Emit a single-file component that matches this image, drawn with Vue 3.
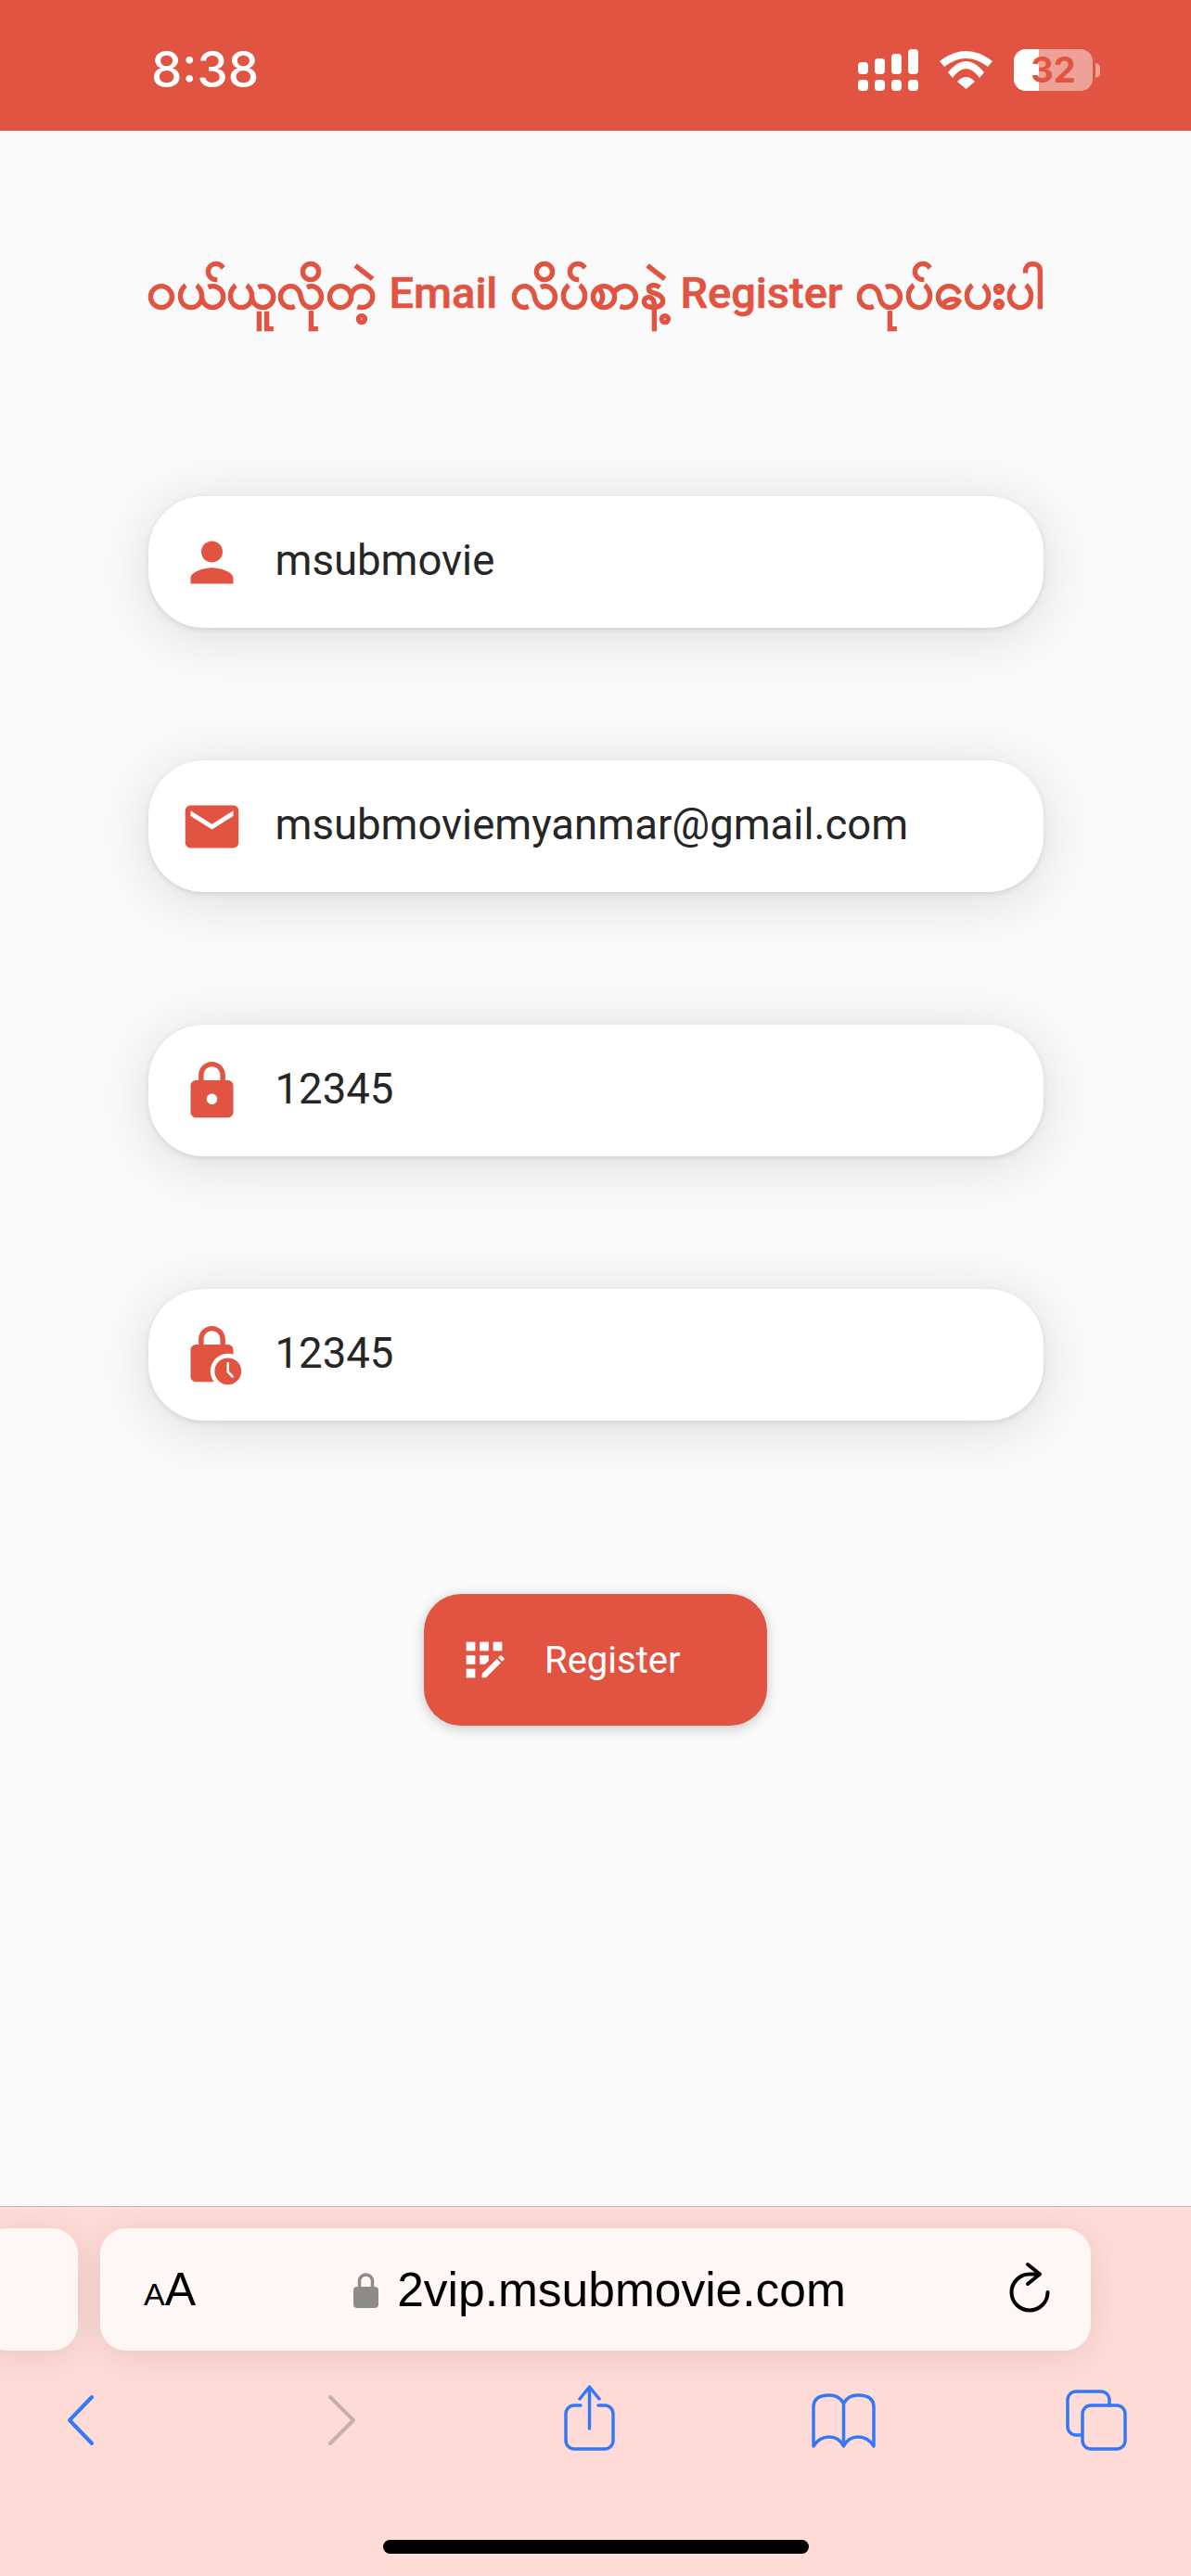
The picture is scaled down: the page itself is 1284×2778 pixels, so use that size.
<script setup>
const lockPath = 'M18 8h-1V6c0-2.76-2.24-5-5-5S7 3.24 7 6v2H6c-1.1 0-2 .9-2 2v10c0 1.1.9 2 2 2h12c1.1 0 2-.9 2-2V10c0-1.1-.9-2-2-2zm-6 9c-1.1 0-2-.9-2-2s.9-2 2-2 2 .9 2 2-.9 2-2 2zm3.1-9H8.9V6c0-1.71 1.39-3.1 3.1-3.1 1.71 0 3.1 1.39 3.1 3.1v2z'

const fields = [
  { value: 'msubmovie', icon: 'M12 12c2.21 0 4-1.79 4-4s-1.79-4-4-4-4 1.79-4 4 1.79 4 4 4zm0 2c-2.67 0-8 1.34-8 4v2h16v-2c0-2.66-5.33-4-8-4z' },
  { value: 'msubmoviemyanmar@gmail.com', icon: 'M20 4H4c-1.1 0-1.99.9-1.99 2L2 18c0 1.1.9 2 2 2h16c1.1 0 2-.9 2-2V6c0-1.1-.9-2-2-2zm0 4l-8 5-8-5V6l8 5 8-5v2z' },
  { value: '12345', icon: lockPath },
  { value: '12345', icon: 'M18 8h-1V6c0-2.76-2.24-5-5-5S7 3.24 7 6v2H6c-1.1 0-2 .9-2 2v10c0 1.1.9 2 2 2h12c1.1 0 2-.9 2-2V10c0-1.1-.9-2-2-2zm-2.9 0H8.9V6c0-1.71 1.39-3.1 3.1-3.1 1.71 0 3.1 1.39 3.1 3.1v2z', clock: true }
]

const signalBars = [
  { x: 0, y: 14 },
  { x: 18, y: 10 },
  { x: 36, y: 5 },
  { x: 54, y: 0 }
]
</script>

<template>
  <div class="page">
    <header class="status-bar">
      <span class="time">8:38</span>
      <div class="status-icons">
        <svg class="signal" width="65" height="45" viewBox="0 0 65 45" fill="#fff">
          <g v-for="bar in signalBars" :key="bar.x">
            <rect :x="bar.x" :y="bar.y" width="11" :height="27 - bar.y" rx="4" />
            <rect :x="bar.x" y="33" width="11" height="12" rx="4" />
          </g>
        </svg>
        <svg class="wifi" width="57" height="41" viewBox="0 0 57 41" fill="#fff">
          <path d="M0 11Q28.5-11 57 11L52 17Q28.5-1 5 17Z" />
          <path d="M9 23Q28.5-1 48 23L43 29Q28.5 9 14 29Z" />
          <path d="M19 33Q28.5 23 38 33L28.5 41Z" />
        </svg>
        <div class="battery">
          <div class="battery-fill"></div>
          <span class="battery-level">32</span>
        </div>
        <div class="battery-nub"></div>
      </div>
    </header>

    <main class="content">
      <h1 class="title">ဝယ်ယူလိုတဲ့ <span class="latin">Email</span> လိပ်စာနဲ့ <span class="latin">Register</span> လုပ်ပေးပါ</h1>

      <div class="fields">
        <div v-for="field in fields" :key="field.icon" class="field">
          <svg class="field-icon" viewBox="0 0 24 24">
            <path :d="field.icon" />
            <template v-if="field.clock">
              <circle class="clock-ring" cx="18" cy="18" r="6.6" />
              <circle cx="18" cy="18" r="5" />
              <path class="clock-hands" d="M18 15v3.200l1.700 1.800" />
            </template>
          </svg>
          <span class="field-text">{{ field.value }}</span>
        </div>
      </div>

      <button class="register" type="button">
        <svg class="register-icon" viewBox="0 0 24 24" fill="#fff">
          <rect x="10" y="4" width="4" height="4" />
          <rect x="4" y="16" width="4" height="4" />
          <rect x="4" y="10" width="4" height="4" />
          <rect x="4" y="4" width="4" height="4" />
          <polygon points="14,12.42 14,10 10,10 10,14 12.42,14" />
          <path d="M20.88 11.29l-1.17-1.17c-.16-.16-.42-.16-.58 0L18.25 11 20 12.75l.88-.88c.16-.16.16-.42 0-.58z" />
          <polygon points="11,18.25 11,20 12.75,20 19.42,13.33 17.67,11.58" />
          <polygon points="16,4 16,8 20,8 20,4" />
        </svg>
        <span class="register-text">Register</span>
      </button>
    </main>

    <footer class="browser">
      <div class="tabs-row">
        <div class="prev-tab"></div>
        <div class="address">
          <span class="text-size"><small>A</small>A</span>
          <div class="url">
            <svg width="27" height="39" viewBox="0 0 27 39" fill="none">
              <path d="M6.5 18V10a7 7 0 0 1 14 0v8" stroke="#8e8b8b" stroke-width="3.5" />
              <rect y="16" width="27" height="23" rx="4" fill="#8e8b8b" />
            </svg>
            <span>2vip.msubmovie.com</span>
          </div>
          <svg class="reload" width="46" height="56" viewBox="0 0 46 56" fill="none" stroke="#000" stroke-width="4" stroke-linecap="round" stroke-linejoin="round">
            <path d="M31 14.500H22A19.500 19.500 0 1 0 41.500 34" />
            <path d="M20 4l13 10.500L20 25" />
          </svg>
        </div>
      </div>

      <div class="toolbar">
        <svg width="30" height="76" viewBox="0 0 30 76" fill="none" stroke="#3478f6" stroke-width="4" stroke-linecap="round" stroke-linejoin="round">
          <path d="M27 13L3 38l24 25" />
        </svg>
        <svg class="forward" width="31" height="76" viewBox="0 0 31 76" fill="none" stroke="#c4b0ac" stroke-width="4" stroke-linecap="round" stroke-linejoin="round">
          <path d="M3 13l25 25L3 63" />
        </svg>
        <svg class="share" width="55" height="76" viewBox="0 0 55 76" fill="none" stroke="#3478f6" stroke-width="3.5" stroke-linecap="round" stroke-linejoin="round">
          <path d="M18 22h-7a9 9 0 0 0-9 9v29a9 9 0 0 0 9 9h33a9 9 0 0 0 9-9V31a9 9 0 0 0-9-9h-7" />
          <path d="M27.500 47V2M17 15L27.500 2 38 15" />
        </svg>
        <svg class="book" width="71" height="76" viewBox="0 0 69 76" fill="none" stroke="#3478f6" stroke-width="3.5" stroke-linecap="round" stroke-linejoin="round">
          <path d="M34.500 20C31 13 25 11 19 11 10 11 2 14 2 24v42c5-8 11-10 17-10s12 3 15.500 10c3.500-7 9.500-10 15.500-10s12 2 17 10V24c0-10-8-13-17-13-6 0-12 2-15.500 9v46" />
        </svg>
        <svg class="tabs" width="66" height="76" viewBox="0 0 66 76" fill="none" stroke="#3478f6" stroke-width="3.500" stroke-linecap="round" stroke-linejoin="round">
          <path d="M16 54h-5a9 9 0 0 1-9-9V16a9 9 0 0 1 9-9h27a9 9 0 0 1 9 9v6" />
          <rect x="18" y="22" width="46" height="47" rx="9" />
        </svg>
      </div>

      <div class="home-bar"></div>
    </footer>
  </div>
</template>

<style scoped>
.page {
  display: flex;
  flex-direction: column;
  height: 2778px;
  overflow: hidden;
  background: #fafafa;
  font-family: Roboto, sans-serif;
}

.status-bar {
  display: flex;
  justify-content: space-between;
  flex-shrink: 0;
  height: 141px;
  padding: 53px 98px 0 163px;
  box-sizing: border-box;
  background: #e15442;
  color: #fff;
}

.time {
  font-family: Inter, sans-serif;
  font-size: 53px;
  font-weight: 500;
  line-height: 45px;
}

.status-icons {
  display: flex;
  align-items: flex-start;
}

.wifi {
  margin: 2px 23px 0;
}

.battery {
  position: relative;
  width: 85px;
  height: 45px;
  border-radius: 13px;
  background: rgba(255, 255, 255, 0.45);
  text-align: center;
}

.battery-fill {
  position: absolute;
  top: 0;
  left: 0;
  bottom: 0;
  width: 27px;
  border-radius: 13px 0 0 13px;
  background: #fff;
}

.battery-level {
  position: relative;
  display: block;
  font-family: Inter, sans-serif;
  font-size: 38px;
  font-weight: 700;
  line-height: 45px;
  color: #e15442;
}

.battery-nub {
  width: 5px;
  height: 16px;
  margin: 15px 0 0 3px;
  border-radius: 0 8px 8px 0;
  background: rgba(255, 255, 255, 0.45);
}

.content {
  display: flex;
  flex: 1;
  flex-direction: column;
  align-items: center;
}

.title {
  height: 394px;
  margin: 0;
  padding-top: 137px;
  box-sizing: border-box;
  font-size: 56.5px;
  font-weight: 700;
  line-height: 70px;
  color: #e15442;
  white-space: nowrap;
  -webkit-text-stroke: 0.8px #e15442;
}

.latin {
  font-size: 47px;
  font-weight: 500;
  -webkit-text-stroke: 0.6px #e15442;
}

.fields {
  display: flex;
  flex-direction: column;
  gap: 143px;
  width: 965px;
}

.field {
  display: flex;
  align-items: center;
  gap: 34px;
  height: 142px;
  padding-left: 34px;
  box-sizing: border-box;
  border-radius: 60px;
  background: #fff;
  box-shadow: 0 8px 60px rgba(0, 0, 0, 0.12), 0 2px 6px rgba(0, 0, 0, 0.1);
}

.field-icon {
  flex-shrink: 0;
  width: 69px;
  height: 69px;
  fill: #e15442;
}

.clock-ring {
  fill: #fff;
}

.clock-hands {
  fill: none;
  stroke: #fff;
  stroke-width: 0.9;
  stroke-linecap: round;
}

.field-text {
  margin-top: -3px;
  font-size: 45.5px;
  color: #262626;
}

.register {
  display: flex;
  align-items: center;
  gap: 36px;
  width: 370px;
  height: 142px;
  margin-top: 187px;
  padding: 0 0 0 36px;
  border: none;
  border-radius: 40px;
  background: #e15442;
  box-shadow: 0 3px 14px rgba(0, 0, 0, 0.2);
  color: #fff;
  font-family: inherit;
}

.register-icon {
  flex-shrink: 0;
  width: 58px;
  height: 58px;
}

.register-text {
  font-size: 40px;
}

.browser {
  flex-shrink: 0;
  height: 399px;
  box-sizing: border-box;
  border-top: 1px solid #c9b6b4;
  background: #ffdcd7;
}

.tabs-row {
  display: flex;
  gap: 24px;
  margin: 23px 0 37px -20px;
}

.prev-tab {
  flex-shrink: 0;
  width: 104px;
  height: 132px;
  border-radius: 28px;
  background: #fff7f6;
  box-shadow: 0 6px 40px rgba(0, 0, 0, 0.1);
}

.address {
  display: flex;
  align-items: center;
  justify-content: space-between;
  flex-shrink: 0;
  width: 1068px;
  height: 132px;
  padding: 0 42px 0 47px;
  box-sizing: border-box;
  border-radius: 28px;
  background: #fff7f6;
  box-shadow: 0 6px 40px rgba(0, 0, 0, 0.1);
  color: #000;
  font-family: "Liberation Sans", sans-serif;
}

.text-size {
  font-size: 50px;
}

.text-size small {
  font-size: 34px;
}

.url {
  display: flex;
  align-items: center;
  gap: 20px;
  margin-left: -6px;
  font-size: 51.5px;
}

.reload {
  margin-top: -6px;
}

.toolbar {
  display: flex;
  padding-left: 72px;
}

.forward {
  margin-left: 251px;
}

.share {
  margin-left: 224px;
}

.book {
  margin-left: 211px;
}

.tabs {
  margin-left: 204px;
}

.home-bar {
  width: 459px;
  height: 15px;
  margin: 91px auto 0;
  border-radius: 8px;
  background: #000;
}
</style>
